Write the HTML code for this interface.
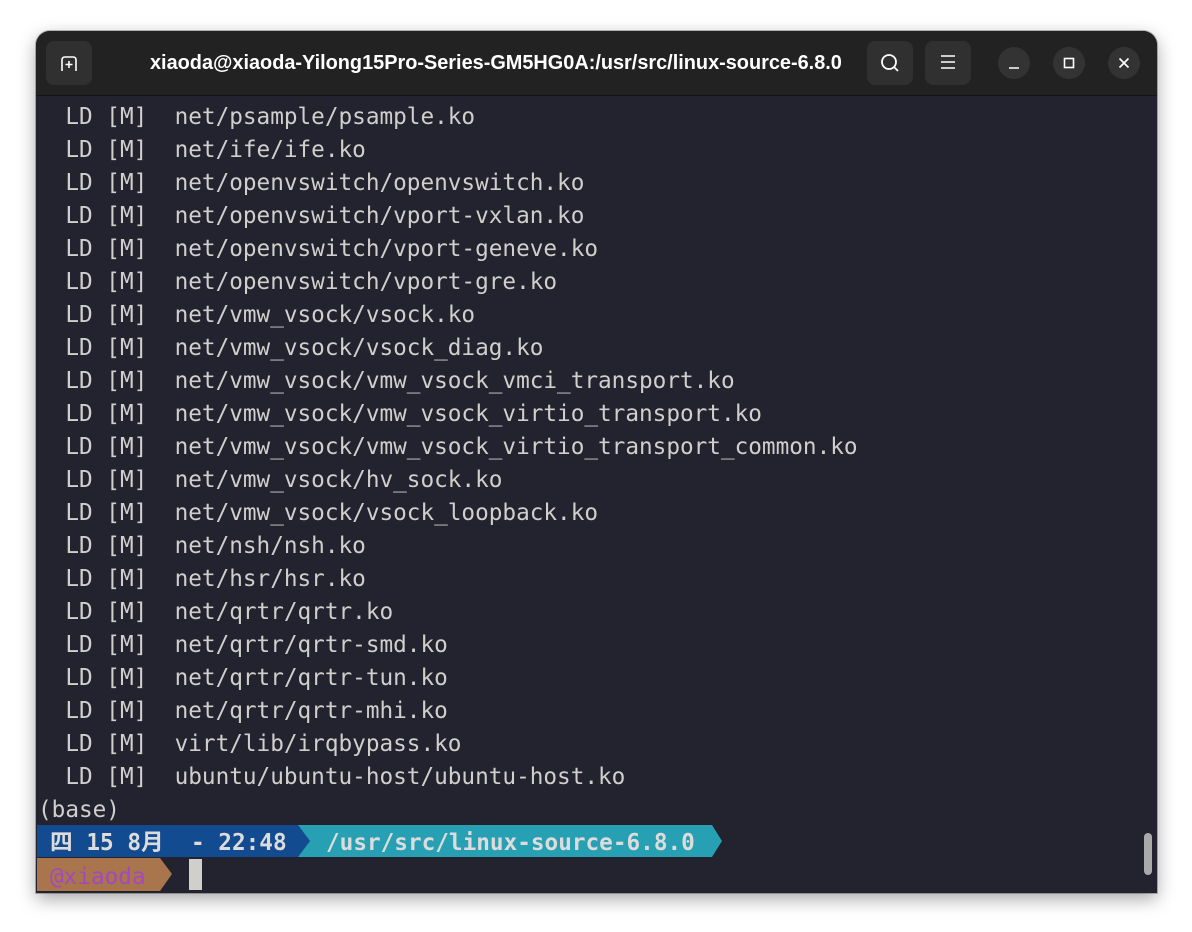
<!DOCTYPE html>
<html><head><meta charset="utf-8"><style>
html,body{margin:0;padding:0;background:#fff;width:1192px;height:932px;overflow:hidden;position:relative}
.win{position:absolute;left:36px;top:31px;width:1121px;height:862px;border-radius:14px 14px 0 0;background:#23222f;overflow:hidden;box-shadow:0 6px 18px rgba(0,0,0,.35),0 0 0 1px rgba(0,0,0,.25)}
.hdr{position:absolute;left:0;top:0;right:0;height:64px;background:#222222;border-bottom:1px solid #151515}
.btn{position:absolute;top:10px;width:46px;height:44px;border-radius:8px;background:#303030}
.cb{position:absolute;top:16px;width:32px;height:32px;border-radius:50%;background:#333}
.title{position:absolute;left:114px;top:21px;color:#fff;font:bold 19.9px "Liberation Sans",sans-serif;white-space:nowrap}
.term{position:absolute;left:2px;top:70px;font-family:"DejaVu Sans Mono","Liberation Mono","Noto Sans CJK SC",monospace;font-size:22.7px;line-height:33px;color:#d0cfcc;white-space:pre}
.seg{position:absolute;font-family:"DejaVu Sans Mono","Noto Sans CJK SC",monospace;font-size:22.7px;line-height:32px;white-space:pre;font-weight:bold}
</style></head><body>
<div class="win">
 <div class="hdr">
  <div class="btn" style="left:10px"><svg width="46" height="44" viewBox="0 0 46 44"><path d="M16 30V19q0-3 3-3h8q3 0 3 3v11" fill="none" stroke="#fff" stroke-width="1.6"/><path d="M23 20v7M19.5 23.5h7" stroke="#fff" stroke-width="1.6"/></svg></div>
  <div class="title">xiaoda@xiaoda-Yilong15Pro-Series-GM5HG0A:/usr/src/linux-source-6.8.0</div>
  <div class="btn" style="left:831px"><svg width="46" height="44" viewBox="0 0 46 44"><circle cx="22" cy="21" r="7" fill="none" stroke="#fff" stroke-width="1.8"/><path d="M27 26l4 4" stroke="#fff" stroke-width="1.8"/></svg></div>
  <div class="btn" style="left:889px"><svg width="46" height="44" viewBox="0 0 46 44"><path d="M16 15h14M16 21h14M16 27h14" stroke="#fff" stroke-width="1.6"/></svg></div>
  <div class="cb" style="left:962px"><svg width="32" height="32"><path d="M11 21h10" stroke="#fff" stroke-width="1.6"/></svg></div>
  <div class="cb" style="left:1017px"><svg width="32" height="32"><rect x="11.5" y="11.5" width="9" height="9" fill="none" stroke="#fff" stroke-width="1.6"/></svg></div>
  <div class="cb" style="left:1072px"><svg width="32" height="32"><path d="M11.5 11.5l9 9M20.5 11.5l-9 9" stroke="#fff" stroke-width="1.6"/></svg></div>
 </div>
 <div class="term">  LD [M]  net/psample/psample.ko
  LD [M]  net/ife/ife.ko
  LD [M]  net/openvswitch/openvswitch.ko
  LD [M]  net/openvswitch/vport-vxlan.ko
  LD [M]  net/openvswitch/vport-geneve.ko
  LD [M]  net/openvswitch/vport-gre.ko
  LD [M]  net/vmw_vsock/vsock.ko
  LD [M]  net/vmw_vsock/vsock_diag.ko
  LD [M]  net/vmw_vsock/vmw_vsock_vmci_transport.ko
  LD [M]  net/vmw_vsock/vmw_vsock_virtio_transport.ko
  LD [M]  net/vmw_vsock/vmw_vsock_virtio_transport_common.ko
  LD [M]  net/vmw_vsock/hv_sock.ko
  LD [M]  net/vmw_vsock/vsock_loopback.ko
  LD [M]  net/nsh/nsh.ko
  LD [M]  net/hsr/hsr.ko
  LD [M]  net/qrtr/qrtr.ko
  LD [M]  net/qrtr/qrtr-smd.ko
  LD [M]  net/qrtr/qrtr-tun.ko
  LD [M]  net/qrtr/qrtr-mhi.ko
  LD [M]  virt/lib/irqbypass.ko
  LD [M]  ubuntu/ubuntu-host/ubuntu-host.ko
(base)</div>
 <svg style="position:absolute;left:0;top:794px" width="700" height="68">
  <polygon points="1,0 262,0 274,16 262,32 1,32" fill="#134b90"/>
  <polygon points="262,0 676,0 686,16 676,32 262,32 274,16" fill="#26a0b2"/>
  <polygon points="1,33 124,33 136,49 124,66 1,66" fill="#a8754c"/>
  <rect x="153" y="34" width="13" height="31" fill="#d0cfcc"/>
 </svg>
 <div class="seg" style="left:14px;top:796px;color:#dcdcdc">四 15 8月  - 22:48</div>
 <div class="seg" style="left:290px;top:796px;color:#dcdcdc">/usr/src/linux-source-6.8.0</div>
 <div class="seg" style="left:14px;top:830px;color:#a548c0;font-weight:normal">@xiaoda</div>
 <div style="position:absolute;left:1108px;top:802px;width:8px;height:42px;border-radius:4px;background:#aaa"></div>
</div>
</body></html>
